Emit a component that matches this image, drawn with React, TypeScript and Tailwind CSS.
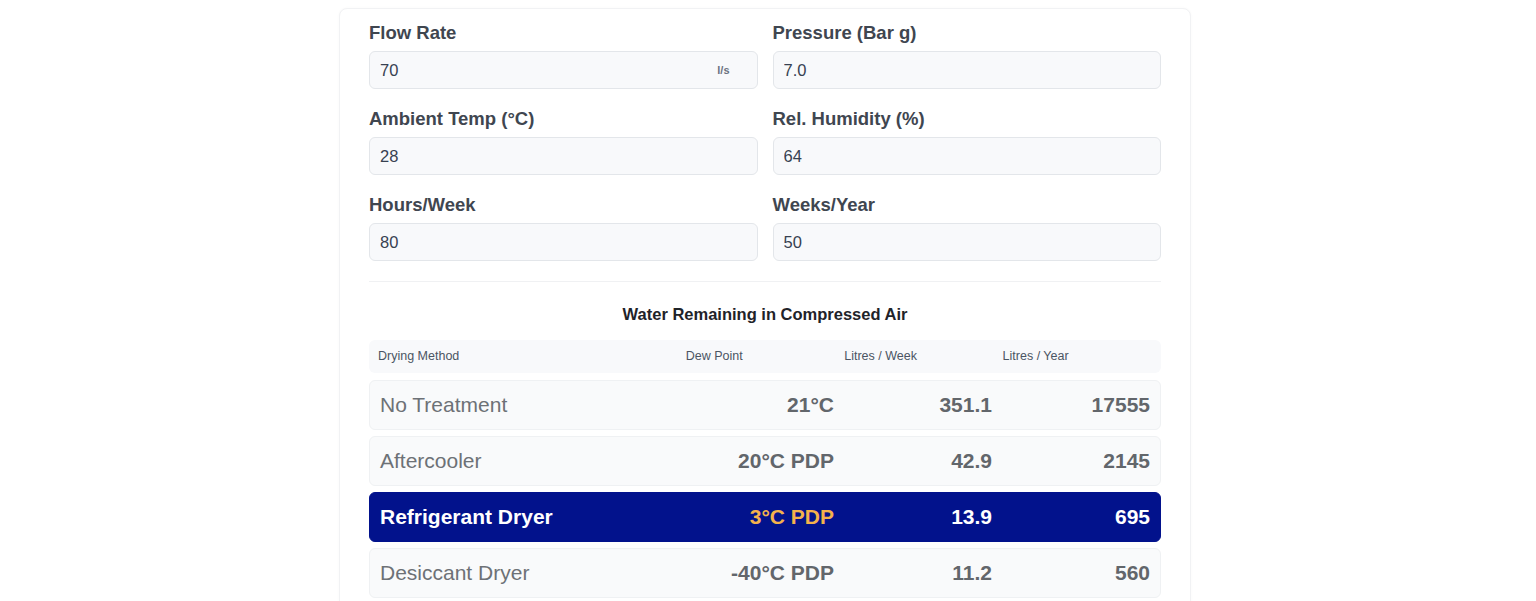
import React from "react";

type Field = { label: string; value: string; unit?: string };

const fields: Field[] = [
  { label: "Flow Rate", value: "70", unit: "l/s" },
  { label: "Pressure (Bar g)", value: "7.0" },
  { label: "Ambient Temp (°C)", value: "28" },
  { label: "Rel. Humidity (%)", value: "64" },
  { label: "Hours/Week", value: "80" },
  { label: "Weeks/Year", value: "50" },
];

type Row = { method: string; dew: string; week: string; year: string; active?: boolean };

const rows: Row[] = [
  { method: "No Treatment", dew: "21°C", week: "351.1", year: "17555" },
  { method: "Aftercooler", dew: "20°C PDP", week: "42.9", year: "2145" },
  { method: "Refrigerant Dryer", dew: "3°C PDP", week: "13.9", year: "695", active: true },
  { method: "Desiccant Dryer", dew: "-40°C PDP", week: "11.2", year: "560" },
];

export default function App() {
  return (
    <div
      className="min-h-screen bg-white pt-2 pr-[6px]"
      style={{ fontFamily: '"Liberation Sans", Arial, sans-serif' }}
    >
      <div className="mx-auto w-[852px] rounded-t-lg border border-[#f1f2f4] bg-white px-[29px] pt-[10px] pb-6 shadow-[0_0_3px_rgba(0,0,0,0.03)]">
        <div className="grid grid-cols-2 gap-x-[15px] gap-y-4">
          {fields.map((f) => (
            <div key={f.label}>
              <label className="mb-1 block text-[18.5px] leading-7 font-bold text-[#3f4650]">
                {f.label}
              </label>
              <div className="relative">
                <input
                  readOnly
                  value={f.value}
                  className="h-[38px] w-full rounded-md border border-[#e3e6ea] bg-[#f8f9fb] px-2.5 text-[16.5px] text-[#374151] outline-none"
                />
                {f.unit && (
                  <span className="absolute top-1/2 right-[28px] -translate-y-1/2 text-[11px] font-bold text-[#6b7280]">
                    {f.unit}
                  </span>
                )}
              </div>
            </div>
          ))}
        </div>

        <div className="mt-5 border-t border-[#f0f1f3]" />

        <h3 className="mt-5 mb-3.5 text-center text-[16.5px] leading-6 font-bold text-[#1f2329]">
          Water Remaining in Compressed Air
        </h3>

        <div className="grid h-[33px] grid-cols-[2fr_1fr_1fr_1fr] items-center rounded-md bg-[#f8f9fb] text-[12.5px] text-[#4b5563]">
          <span className="pl-[9px]">Drying Method</span>
          <span>Dew Point</span>
          <span>Litres / Week</span>
          <span>Litres / Year</span>
        </div>

        <div className="mt-[7px] flex flex-col gap-[6px]">
          {rows.map((r) => (
            <div
              key={r.method}
              className={`grid h-[50px] grid-cols-[2fr_1fr_1fr_1fr] items-center rounded-md border text-[21px] ${
                r.active
                  ? "border-[#02128c] bg-[#02128c] text-white"
                  : "border-[#eff1f3] bg-[#f9fafb] text-[#62666b]"
              }`}
            >
              <span className={`pl-2.5 ${r.active ? "font-bold" : "font-normal text-[#6d7176]"}`}>
                {r.method}
              </span>
              <span className={`pr-2.5 text-right font-bold ${r.active ? "text-[#f4b24c]" : ""}`}>
                {r.dew}
              </span>
              <span className="pr-2.5 text-right font-bold">{r.week}</span>
              <span className="pr-2.5 text-right font-bold">{r.year}</span>
            </div>
          ))}
        </div>
      </div>
    </div>
  );
}
